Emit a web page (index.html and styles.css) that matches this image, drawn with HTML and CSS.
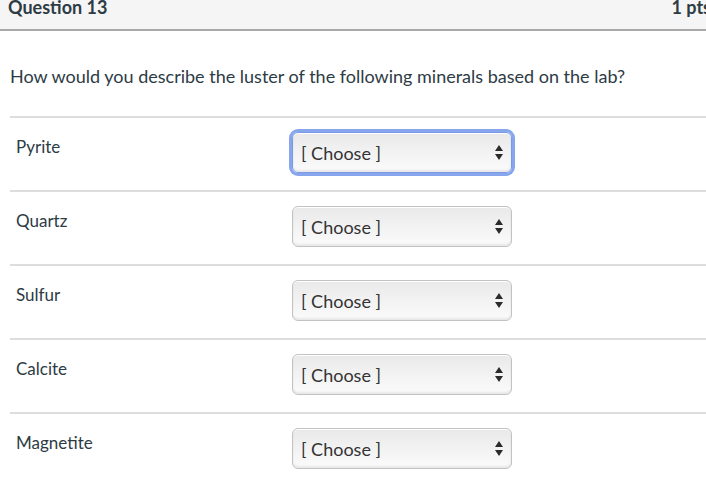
FILE: index.html
```html
<!doctype html>
<html>
	<head>
		<title>Question 13</title>
		<link rel="stylesheet" href="styles.css">
	</head>
	<body>
		<div class="question">
			<div class="questionHeader">
				<span class="questionName">Question 13</span>
				<span class="questionPoints">1 pts</span>
			</div>
			<div class="questionBody">
				<div class="questionText">How would you describe the luster of the following minerals based on the lab?</div>
				<div class="answerRow">
					<div class="answerLabel">Pyrite</div>
					<div class="selectWrap selectFocused">
						<select class="answerSelect"><option>[ Choose ]</option></select>
						<svg class="selectArrows" width="8" height="15" viewBox="0 0 8 15"><path d="M4 0L8 6H0Z M4 15L0 9H8Z" fill="#2b2b2b"/></svg>
					</div>
				</div>
				<div class="answerRow">
					<div class="answerLabel">Quartz</div>
					<div class="selectWrap">
						<select class="answerSelect"><option>[ Choose ]</option></select>
						<svg class="selectArrows" width="8" height="15" viewBox="0 0 8 15"><path d="M4 0L8 6H0Z M4 15L0 9H8Z" fill="#2b2b2b"/></svg>
					</div>
				</div>
				<div class="answerRow">
					<div class="answerLabel">Sulfur</div>
					<div class="selectWrap">
						<select class="answerSelect"><option>[ Choose ]</option></select>
						<svg class="selectArrows" width="8" height="15" viewBox="0 0 8 15"><path d="M4 0L8 6H0Z M4 15L0 9H8Z" fill="#2b2b2b"/></svg>
					</div>
				</div>
				<div class="answerRow">
					<div class="answerLabel">Calcite</div>
					<div class="selectWrap">
						<select class="answerSelect"><option>[ Choose ]</option></select>
						<svg class="selectArrows" width="8" height="15" viewBox="0 0 8 15"><path d="M4 0L8 6H0Z M4 15L0 9H8Z" fill="#2b2b2b"/></svg>
					</div>
				</div>
				<div class="answerRow">
					<div class="answerLabel">Magnetite</div>
					<div class="selectWrap">
						<select class="answerSelect"><option>[ Choose ]</option></select>
						<svg class="selectArrows" width="8" height="15" viewBox="0 0 8 15"><path d="M4 0L8 6H0Z M4 15L0 9H8Z" fill="#2b2b2b"/></svg>
					</div>
				</div>
			</div>
		</div>
	</body>
</html>
```

FILE: styles.css
```css
body {
	margin: 0;
	overflow: hidden;
	background: #ffffff;
	font-family: Lato, "Liberation Sans", sans-serif;
	color: #2d3b45;
}

.question {
	width: 714px;
}

.questionHeader {
	height: 31px;
	box-sizing: border-box;
	display: flex;
	align-items: flex-end;
	justify-content: space-between;
	padding: 0 3px 13px 8px;
	background: #f5f5f5;
	border-bottom: 2px solid #a9a9a9;
	font-size: 18px;
	font-weight: bold;
	line-height: 18px;
}

.questionBody {
	padding-left: 10px;
}

.questionText {
	font-size: 18px;
	line-height: 26px;
	padding: 32px 0 27px 0;
}

.answerRow {
	display: flex;
	align-items: flex-start;
	border-top: 2px solid #dddddd;
	padding: 14px 0 17px 6px;
}

.answerLabel {
	width: 276px;
	font-size: 17px;
	line-height: 24px;
	margin-top: 3px;
}

.selectWrap {
	position: relative;
	width: 220px;
	height: 41px;
	border-radius: 6px;
}

.selectFocused {
	box-shadow: 0 0 0 3px #88a6ee;
}

.answerSelect {
	appearance: none;
	-webkit-appearance: none;
	width: 100%;
	height: 100%;
	box-sizing: border-box;
	border: 1px solid #c2c2c2;
	border-radius: 6px;
	padding: 0 0 0 8px;
	background: linear-gradient(#e9e9e9, #f4f4f4 60%, #fbfbfb);
	box-shadow: inset 0 -2px 2px rgba(0, 0, 0, 0.08), inset 0 1px 0 #ffffff;
	font-family: Lato, "Liberation Sans", sans-serif;
	font-size: 18px;
	color: #333333;
}

.selectFocused .answerSelect {
	border-color: #7b9ae4;
}

.selectArrows {
	position: absolute;
	right: 9px;
	top: 13px;
}
```
